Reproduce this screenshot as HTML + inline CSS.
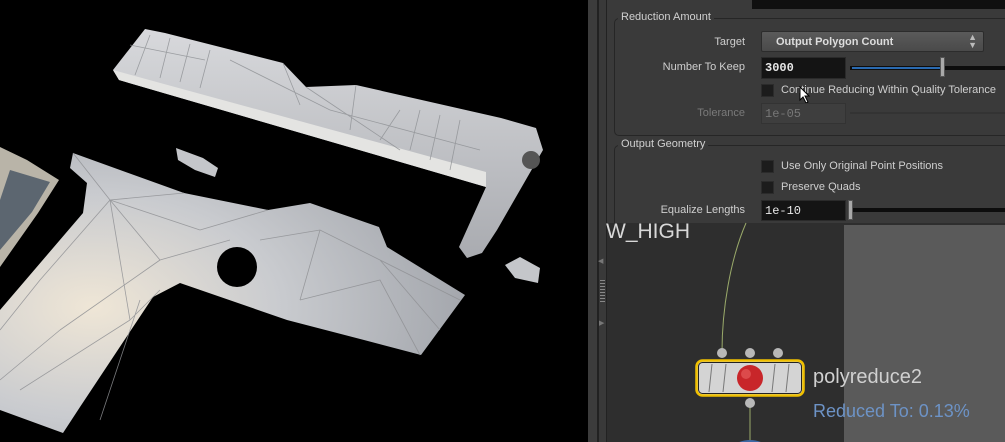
<!DOCTYPE html>
<html><head><meta charset="utf-8"><style>
*{margin:0;padding:0;box-sizing:border-box}
html,body{width:1005px;height:442px;overflow:hidden}
body{background:#000;position:relative;font-family:"Liberation Sans","DejaVu Sans",sans-serif}
.a{position:absolute}
.lbl{position:absolute;font-size:11px;color:#cfcfcf;text-align:right;width:140px}
.fld{position:absolute;background:#141414;border:1px solid #2a2a2a;color:#e8e8e8;font-family:"Liberation Mono",monospace;font-size:12px;padding:3px 0 0 3px}
.cb{position:absolute;width:13px;height:13px;background:#1c1c1c;border:1px solid #2b2b2b}
.txt{position:absolute;font-size:11px;color:#cfcfcf;white-space:nowrap}
</style></head><body>
<svg class="a" style="left:0;top:0" width="588" height="442" viewBox="0 0 588 442">
<defs>
<linearGradient id="g1" x1="0" y1="0" x2="0" y2="1"><stop offset="0" stop-color="#d8d9dc"/><stop offset="1" stop-color="#a9abb0"/></linearGradient>
<radialGradient id="g2" cx="0.2" cy="0.55" r="0.8"><stop offset="0" stop-color="#efe6d6"/><stop offset="0.5" stop-color="#c9cbcf"/><stop offset="1" stop-color="#a4a7ad"/></radialGradient>
</defs>
<rect width="588" height="442" fill="#000"/>
<polygon points="145,29 165,33 283,63 306,87 356,85 501,118 536,128 543,150 520,190 497,230 482,253 467,258 459,247 486,187 119,80 113,70" fill="url(#g1)"/>
<polygon points="113,70 486,172 486,187 119,80" fill="#e4e4e2"/>
<circle cx="531" cy="160" r="9" fill="#555"/>
<g stroke="#8c8e92" stroke-width="0.8" fill="none" opacity="0.8">
<path d="M130,45 L205,60 M150,35 L135,75 M170,38 L160,78 M190,44 L180,82 M210,50 L200,88 M283,63 L300,105 M356,85 L350,130 M400,110 L380,140 M420,110 L410,150 M440,115 L430,160 M460,120 L450,170 M230,60 L330,110 L480,150 M306,87 L400,150"/>
</g>
<polygon points="0,147 27,160 59,180 38,213 0,267" fill="#b9b4a8"/>
<polygon points="10,170 50,182 32,212 0,250 0,200" fill="#5c6670"/>
<polygon points="176,148 203,158 218,168 215,177 195,170 178,160" fill="#c4c6ca"/>
<polygon points="505,265 520,257 540,268 538,283 515,278" fill="#c4c6ca"/>
<path d="M73,153 L184,193 L268,210 L310,203 L379,227 L387,247 L465,295 L421,355 L364,340 L287,320 L180,283 L153,297 L80,407 L63,433 L0,410 L0,310 L83,213 L87,183 L70,168 Z" fill="url(#g2)"/>
<ellipse cx="237" cy="267" rx="20" ry="20" fill="#000"/>
<g stroke="#8f9094" stroke-width="0.8" fill="none" opacity="0.85">
<path d="M110,200 L73,153 M110,200 L184,193 M110,200 L160,260 M110,200 L40,280 M110,200 L130,320 M110,200 L200,230 M160,260 L230,240 M160,260 L60,330 M130,320 L20,390 M130,320 L160,290 M40,280 L0,330 M60,330 L0,380 M200,230 L268,210 M260,240 L320,230 L380,260 L460,300 M300,300 L380,280 L420,355 M320,230 L300,300 M380,260 L440,330 M140,300 L100,420"/>
</g>
</svg>
<div class="a" style="left:588px;top:0;width:9px;height:442px;background:#3c3c3c"></div>
<div class="a" style="left:597px;top:0;width:2px;height:442px;background:#222"></div>
<div class="a" style="left:599px;top:0;width:7px;height:442px;background:#393939"></div>
<div class="a" style="left:606px;top:0;width:1px;height:442px;background:#222"></div>
<!-- network -->
<div class="a" style="left:607px;top:223px;width:398px;height:219px;background:#2e2e2e"></div>
<div class="a" style="left:844px;top:225px;width:161px;height:217px;background:#5a5a5a"></div>
<div class="a" style="left:606px;top:219px;font-size:21px;color:#d8d8d8;line-height:26px;height:26px;white-space:nowrap">W_HIGH</div>
<!-- param panel -->
<div class="a" style="left:607px;top:0;width:398px;height:223px;background:#3a3a3a;overflow:hidden">
<div class="a" style="left:145px;top:0;width:253px;height:9px;background:#101010"></div>
<div class="a" style="left:7px;top:18px;width:395px;height:118px;border:1px solid #262626;border-radius:5px"></div>
<div class="a" style="left:11px;top:11px;background:#3a3a3a;padding:0 3px;font-size:11px;color:#d0d0d0">Reduction Amount</div>
<div class="a" style="left:7px;top:145px;width:395px;height:100px;border:1px solid #262626;border-radius:5px"></div>
<div class="a" style="left:11px;top:138px;background:#3a3a3a;padding:0 3px;font-size:11px;color:#d0d0d0">Output Geometry</div>
</div>
<div class="lbl" style="left:605px;top:36px">Target</div>
<div class="a" style="left:761px;top:31px;width:223px;height:21px;background:linear-gradient(#5a5a5a,#4a4a4a);border:1px solid #2c2c2c;border-radius:2px;font-size:11px;font-weight:bold;color:#ddd;padding:4px 0 0 14px">Output Polygon Count<span style="position:absolute;right:6px;top:1px;font-size:9px;line-height:8px;color:#bbb">▲<br>▼</span></div>
<div class="lbl" style="left:605px;top:61px">Number To Keep</div>
<div class="fld" style="left:761px;top:57px;width:85px;height:22px;font-weight:bold">3000</div>
<div class="a" style="left:850px;top:66px;width:155px;height:4px;background:#0d0d0d"></div>
<div class="a" style="left:852px;top:67px;width:90px;height:2px;background:#2a6ab0"></div>
<div class="a" style="left:940px;top:57px;width:5px;height:20px;background:#a9a9a9;border:1px solid #555"></div>
<div class="cb" style="left:761px;top:84px"></div>
<div class="txt" style="left:781px;top:84px">Continue Reducing Within Quality Tolerance</div>
<svg class="a" style="left:799px;top:86px" width="12" height="18"><path d="M1,1 L1,14 L4,11 L7,17 L9,16 L6,10 L10,10 Z" fill="#fff" stroke="#000" stroke-width="1"/></svg>
<div class="lbl" style="left:605px;top:107px;color:#7a7a7a">Tolerance</div>
<div class="fld" style="left:761px;top:103px;width:85px;height:21px;background:#3e3e3e;color:#777;border-color:#333">1e-05</div>
<div class="a" style="left:850px;top:112px;width:155px;height:2px;background:#333"></div>
<div class="cb" style="left:761px;top:160px"></div>
<div class="txt" style="left:781px;top:160px">Use Only Original Point Positions</div>
<div class="cb" style="left:761px;top:181px"></div>
<div class="txt" style="left:781px;top:181px">Preserve Quads</div>
<div class="lbl" style="left:605px;top:204px">Equalize Lengths</div>
<div class="fld" style="left:761px;top:200px;width:85px;height:21px">1e-10</div>
<div class="a" style="left:850px;top:208px;width:155px;height:4px;background:#0d0d0d"></div>
<div class="a" style="left:848px;top:200px;width:5px;height:20px;background:#a9a9a9;border:1px solid #555"></div>
<svg class="a" style="left:590px;top:220px" width="415" height="222">
<path d="M156,3 C140,40 132,90 132,132" stroke="#9aaa6a" stroke-width="1" fill="none"/>
<line x1="160" y1="185" x2="160" y2="222" stroke="#9aaa6a" stroke-width="1"/>
<circle cx="160" cy="250" r="30" fill="#3f68a4"/>
<circle cx="132" cy="133" r="5" fill="#b8b8b8"/><circle cx="160" cy="133" r="5" fill="#b8b8b8"/><circle cx="188" cy="133" r="5" fill="#b8b8b8"/>
<circle cx="160" cy="183" r="5" fill="#b8b8b8"/>
<rect x="106.5" y="140.5" width="107" height="35" rx="6" fill="#d4d4d4" stroke="#f0c000" stroke-width="2.5"/>
<rect x="108.5" y="142.5" width="103" height="31" rx="4" fill="none" stroke="#222" stroke-width="1"/>
<path d="M122,144 L119,172 M136,144 L133,172 M185,144 L182,172 M199,144 L196,172" stroke="#777" stroke-width="1"/>
<circle cx="160" cy="158" r="13" fill="#c8262a"/><circle cx="156" cy="154" r="5" fill="#e45a5a" opacity="0.7"/>
</svg>
<div class="a" style="left:813px;top:366px;font-size:20px;color:#d0d0d0;white-space:nowrap">polyreduce2</div>
<div class="a" style="left:813px;top:401px;font-size:18px;color:#6d93c6;white-space:nowrap">Reduced To: 0.13%</div>
<div class="a" style="left:598px;top:258px;font-size:7px;line-height:8px;color:#777">◀</div>
<div class="a" style="left:600px;top:280px;width:5px;height:24px;background:repeating-linear-gradient(#888 0 1px,transparent 1px 3px)"></div>
<div class="a" style="left:599px;top:320px;font-size:7px;line-height:8px;color:#777">▶</div>
</body></html>
